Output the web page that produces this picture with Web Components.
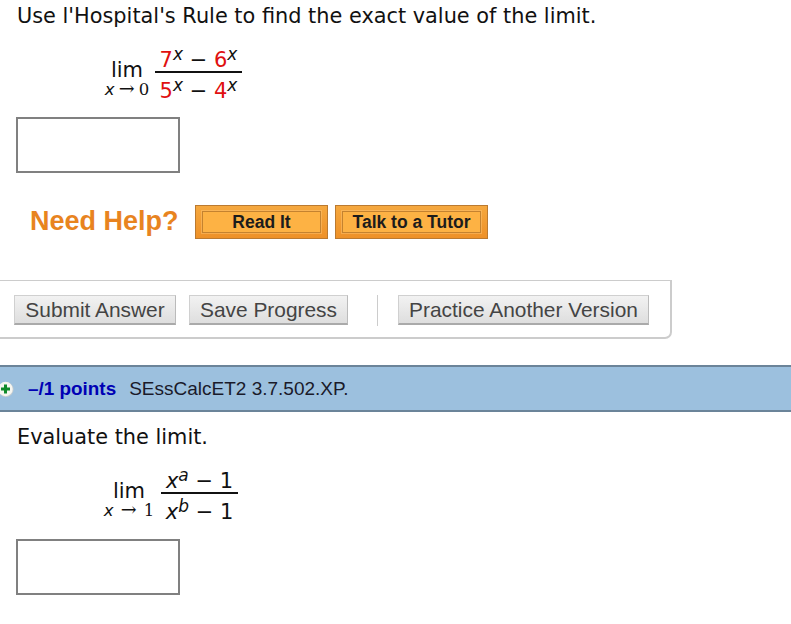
<!DOCTYPE html>
<html>
<head>
<meta charset="utf-8">
<style>
  html, body { margin: 0; padding: 0; background: #fff; }
  body { width: 791px; height: 624px; overflow: hidden; font-family: "DejaVu Sans", sans-serif; color: #111; }
</style>
</head>
<body>
<question-text style="--top: 4px">Use l'Hospital's Rule to find the exact value of the limit.</question-text>
<limit-expr style="--left: 101px; --top: 16px; --lim-w: 52px; --frac-w: 87px; --gap: 2px; --sp: -1px" under="0">
  <span slot="num"><b class="r">7</b><sup>x</sup> − <b class="r">6</b><sup>x</sup></span>
  <span slot="den"><b class="r">5</b><sup>x</sup> − <b class="r">4</b><sup>x</sup></span>
</limit-expr>
<answer-box style="--top: 15px"></answer-box>
<help-row></help-row>
<action-panel></action-panel>
<points-bar></points-bar>
<question-text style="--top: 13px">Evaluate the limit.</question-text>
<limit-expr style="--left: 101px; --top: 16px; --lim-w: 56px; --frac-w: 77px; --gap: 4px; --sp: 2px" under="1">
  <span slot="num"><i>x</i><sup>a</sup> − 1</span>
  <span slot="den"><i>x</i><sup>b</sup> − 1</span>
</limit-expr>
<answer-box style="--top: 16px"></answer-box>

<script>
class QuestionText extends HTMLElement {
  constructor() {
    super();
    this.shadow = this.attachShadow({ mode: "open" });
    this.shadow.innerHTML = `
      <style>
        :host {
          display: block;
          margin: var(--top) 0 0 17px;
          font: 20.85px/24px "DejaVu Sans", sans-serif;
          color: #111;
        }
      </style>
      <slot></slot>
    `;
  }
}

class LimitExpr extends HTMLElement {
  constructor() {
    super();
    this.shadow = this.attachShadow({ mode: "open" });
  }

  connectedCallback() {
    const under = this.getAttribute("under");
    this.shadow.innerHTML = `
      <style>
        :host {
          display: flex;
          margin: var(--top) 0 0 var(--left);
          gap: var(--gap);
          font-family: "DejaVu Sans", sans-serif;
          font-size: 21px;
          color: #111;
        }
        .lim {
          width: var(--lim-w);
          display: flex;
          flex-direction: column;
          align-items: center;
          padding-top: 15px;
        }
        .lim .word { line-height: 23px; }
        .lim .under {
          font: 16.5px/16px "DejaVu Serif", serif;
          white-space: nowrap;
          word-spacing: var(--sp);
        }
        .lim .under i { font-family: "DejaVu Sans", sans-serif; font-style: oblique; }
        .lim .under .arrow { font-size: 19px; line-height: 0; }
        .frac { width: var(--frac-w); text-align: center; }
        .num, .den { white-space: nowrap; }
        .num { height: 27px; line-height: 32px; border-bottom: 2px solid #111; }
        .den { height: 29px; line-height: 36px; }
        ::slotted(span) { display: inline-block; }
      </style>
      <div class="lim">
        <span class="word">lim</span>
        <span class="under"><i>x</i> <span class="arrow">→</span> ${under}</span>
      </div>
      <div class="frac">
        <div class="num"><slot name="num"></slot></div>
        <div class="den"><slot name="den"></slot></div>
      </div>
    `;
  }
}

class AnswerBox extends HTMLElement {
  constructor() {
    super();
    this.shadow = this.attachShadow({ mode: "open" });
    this.shadow.innerHTML = `
      <style>
        :host {
          display: block;
          box-sizing: border-box;
          width: 164px;
          height: 56px;
          margin: var(--top) 0 0 16px;
          border: 2px solid #808080;
          background: #fff;
        }
      </style>
    `;
  }
}

class OrangeButton extends HTMLElement {
  constructor() {
    super();
    this.shadow = this.attachShadow({ mode: "open" });
    this.shadow.innerHTML = `
      <style>
        :host {
          display: block;
          box-sizing: border-box;
          height: 34px;
          padding: 5px 6px;
          background: linear-gradient(#f5a83f, #ee9128);
          border: 1px solid #bb7a30;
        }
        div {
          box-sizing: border-box;
          height: 22px;
          background: #fdb244;
          border: 1px solid #c4822f;
          box-shadow: 0 0 0 1px rgba(255, 200, 120, .45);
          text-align: center;
          font: bold 17.5px/21px "Liberation Sans", sans-serif;
          color: #1c1c1c;
          white-space: nowrap;
        }
      </style>
      <div><slot></slot></div>
    `;
  }
}

class HelpRow extends HTMLElement {
  constructor() {
    super();
    this.shadow = this.attachShadow({ mode: "open" });
    this.shadow.innerHTML = `
      <style>
        :host {
          display: flex;
          align-items: center;
          height: 34px;
          margin: 32px 0 0 30px;
        }
        .title {
          width: 165px;
          margin-top: -2px;
          font: bold 27px/34px "Liberation Sans", sans-serif;
          color: #e8841f;
        }
        .read { width: 133px; margin-right: 7px; }
        .talk { width: 153px; }
      </style>
      <span class="title">Need Help?</span>
      <orange-button class="read">Read It</orange-button>
      <orange-button class="talk">Talk to a Tutor</orange-button>
    `;
  }
}

class GreyButton extends HTMLElement {
  constructor() {
    super();
    this.shadow = this.attachShadow({ mode: "open" });
    this.shadow.innerHTML = `
      <style>
        :host {
          display: block;
          box-sizing: border-box;
          height: 30px;
          background: linear-gradient(#f2f2f2, #dedede);
          border: 1px solid #d0d0d0;
          border-bottom: 2px solid #aaa;
          border-right-color: #bbb;
          text-align: center;
          font: 20.9px/28px "Liberation Sans", sans-serif;
          color: #444;
          white-space: nowrap;
        }
      </style>
      <slot></slot>
    `;
  }
}

class ActionPanel extends HTMLElement {
  constructor() {
    super();
    this.shadow = this.attachShadow({ mode: "open" });
    this.shadow.innerHTML = `
      <style>
        :host {
          display: flex;
          align-items: center;
          box-sizing: border-box;
          width: 672px;
          height: 59px;
          margin-top: 41px;
          padding: 2px 0 0 14px;
          border: 2px solid #ccc;
          border-left: 0;
          border-radius: 0 0 7px 0;
          border-top-width: 1px;
        }
        .submit { width: 162px; margin-right: 13px; }
        .save { width: 159px; margin-right: 29px; }
        .sep { width: 1px; height: 31px; background: #ccc; margin-right: 20px; }
        .practice { width: 251px; }
      </style>
      <grey-button class="submit">Submit Answer</grey-button>
      <grey-button class="save">Save Progress</grey-button>
      <span class="sep"></span>
      <grey-button class="practice">Practice Another Version</grey-button>
    `;
  }
}

class PointsBar extends HTMLElement {
  constructor() {
    super();
    this.shadow = this.attachShadow({ mode: "open" });
    this.shadow.innerHTML = `
      <style>
        :host {
          display: flex;
          align-items: center;
          box-sizing: border-box;
          height: 47px;
          margin-top: 26px;
          background: #9cc0de;
          border-top: 2px solid #6b8499;
          border-bottom: 2px solid #6b8499;
          font: 19px/24px "Liberation Sans", sans-serif;
          color: #1a1a2a;
        }
        .plus {
          flex: none;
          width: 16px;
          height: 16px;
          margin-left: -2px;
          margin-right: 14px;
        }
        b { font-size: 18.9px; color: #0000b4; margin-right: 13px; }
      </style>
      <svg class="plus" viewBox="0 0 16 16">
        <circle cx="8" cy="8.5" r="7.5" fill="#c8cdd0"></circle>
        <circle cx="7.5" cy="8" r="7.2" fill="#f6f6f0"></circle>
        <path d="M6 3.5h3v3h3v3H9v3H6v-3H3v-3h3z" fill="#0f8a2a"></path>
      </svg>
      <b>–/1 points</b>
      <span>SEssCalcET2 3.7.502.XP.</span>
    `;
  }
}

customElements.define("question-text", QuestionText);
customElements.define("limit-expr", LimitExpr);
customElements.define("answer-box", AnswerBox);
customElements.define("orange-button", OrangeButton);
customElements.define("help-row", HelpRow);
customElements.define("grey-button", GreyButton);
customElements.define("action-panel", ActionPanel);
customElements.define("points-bar", PointsBar);
</script>
<style>
  limit-expr b { font-weight: normal; color: #e01010; }
  limit-expr sup { font-size: 17px; font-style: oblique; line-height: 0; vertical-align: 7px; }
  limit-expr i { font-style: oblique; }
</style>
</body>
</html>
